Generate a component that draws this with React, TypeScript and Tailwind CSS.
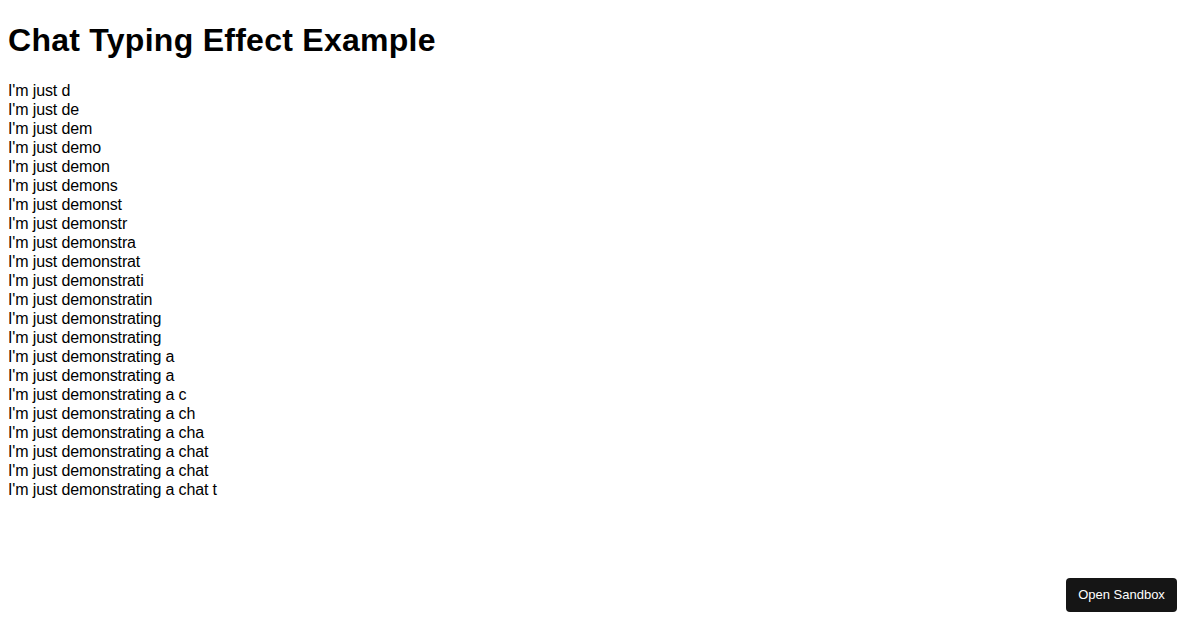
import React from "react";

const lines = [
  "I'm just d",
  "I'm just de",
  "I'm just dem",
  "I'm just demo",
  "I'm just demon",
  "I'm just demons",
  "I'm just demonst",
  "I'm just demonstr",
  "I'm just demonstra",
  "I'm just demonstrat",
  "I'm just demonstrati",
  "I'm just demonstratin",
  "I'm just demonstrating",
  "I'm just demonstrating ",
  "I'm just demonstrating a",
  "I'm just demonstrating a ",
  "I'm just demonstrating a c",
  "I'm just demonstrating a ch",
  "I'm just demonstrating a cha",
  "I'm just demonstrating a chat",
  "I'm just demonstrating a chat ",
  "I'm just demonstrating a chat t",
];

export default function App() {
  return (
    <div className="min-h-screen bg-white text-black px-2 pt-px font-['Liberation_Sans',Arial,sans-serif]">
      <h1 className="mt-[21.44px] mb-[21.44px] text-[32px] leading-[37px] font-bold tracking-[0.27px]">
        Chat Typing Effect Example
      </h1>
      <div className="text-[16px] leading-[19px] tracking-[-0.13px]">
        {lines.map((l, i) => (
          <div key={i} className="whitespace-pre">
            {l}
          </div>
        ))}
      </div>
      <button className="fixed right-[23px] bottom-[18px] h-[34px] w-[111px] rounded-[4px] bg-[#151515] text-white text-[13px]">
        Open Sandbox
      </button>
    </div>
  );
}
